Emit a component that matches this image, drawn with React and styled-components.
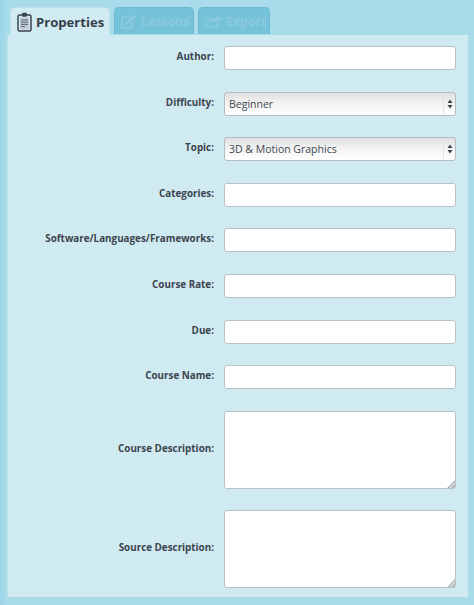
import React from "react";
import styled, { createGlobalStyle } from "styled-components";

const Global = createGlobalStyle`
  html, body { margin: 0; padding: 0; background: #a6dcea; }
  body { font-family: "Open Sans", "Liberation Sans", sans-serif; }
  * { box-sizing: border-box; }
`;

const Page = styled.div`
  width: 474px;
  height: 605px;
  padding: 7px 6px 7px 7px;
  display: flex;
  flex-direction: column;
  overflow: hidden;
  background: linear-gradient(90deg, #9ad5e6 0, #a8dcea 7px, #a8dcea 100%);
`;

const TabBar = styled.div`
  display: flex;
  align-items: flex-end;
  gap: 4px;
  padding-left: 3px;
  height: 28px;
`;

const Tab = styled.div`
  display: flex;
  align-items: center;
  gap: 4px;
  width: ${(p) => p.$w}px;
  height: ${(p) => (p.$active ? "28px" : "27px")};
  margin-bottom: ${(p) => (p.$active ? "0" : "1px")};
  padding: ${(p) => (p.$active ? "0 0 0 6px" : "0 0 0 5px")};
  border-radius: 5px 5px 0 0;
  background: ${(p) => (p.$active ? "#d1ebf3" : "#75c2d9")};
  border: 1px solid ${(p) => (p.$active ? "#bddfe9" : "#6cb9d0")};
  border-bottom: none;
  color: ${(p) => (p.$active ? "#363f48" : "#8ccadd")};
  font-size: ${(p) => (p.$active ? "13.1px" : "12.3px")};
  font-weight: 700;
  white-space: nowrap;
`;

const Panel = styled.div`
  flex: 1;
  background: #d0eaf2;
  border-radius: 0 0 3px 3px;
  border-bottom: 1px solid #b7d8e3;
  border-left: 1px solid #bfdfe9;
  padding: 11px 12px 0 0;
  display: grid;
  grid-template-columns: 206px 232px;
  column-gap: 10px;
  row-gap: 21.6px;
  grid-auto-rows: min-content;
  align-items: center;
`;

const Label = styled.label`
  justify-self: end;
  padding-bottom: 4px;
  font-size: 9.85px;
  font-weight: 700;
  color: #3c444e;
  white-space: nowrap;
`;

const Input = styled.div`
  height: 24px;
  background: #fff;
  border: 1px solid #b9c2c7;
  border-radius: 3px;
`;

const Select = styled.div`
  height: 24px;
  display: flex;
  align-items: center;
  padding-left: 4px;
  border: 1px solid #b3bdc2;
  border-radius: 3px;
  background: linear-gradient(180deg, #e0e0e0 0%, #f2f2f2 45%, #ffffff 100%);
  font-size: 10.5px;
  color: #3f4850;
`;

const SelectText = styled.span`
  flex: 1;
`;

const StepperBox = styled.span`
  display: flex;
  align-items: center;
  justify-content: center;
  width: 12px;
  height: 100%;
  border-left: 1px solid #e4e4e4;
`;

const TextArea = styled.div`
  position: relative;
  height: 78px;
  background: #fff;
  border: 1px solid #b9c2c7;
  border-radius: 3px;
`;

const Grip = styled.svg`
  position: absolute;
  right: 0;
  bottom: 0;
`;

const Stepper = () => (
  <StepperBox>
    <svg width="6" height="10" viewBox="0 0 6 10">
      <path d="M3 0.5 L5.5 4 H0.5 Z M3 9.5 L5.5 6 H0.5 Z" fill="#3a424a" />
    </svg>
  </StepperBox>
);

const Clipboard = () => (
  <svg width="15" height="20" viewBox="0 0 15 20" fill="none">
    <rect x="1" y="3" width="13" height="16" rx="1.5" stroke="#3d464f" strokeWidth="1.5" />
    <rect x="3" y="5.5" width="9" height="12" fill="#c3cfd4" />
    <rect x="5" y="0.8" width="5" height="4" rx="1" fill="#3d464f" />
    <path d="M4 8h7M4 10.2h7M4 12.4h7M4 14.6h4" stroke="#59646d" strokeWidth="1" />
  </svg>
);

const EditIcon = () => (
  <svg width="17" height="15" viewBox="0 0 17 15" fill="none" stroke="#8ccadd">
    <path d="M11 3H2v11h10V8" strokeWidth="1.7" />
    <path d="M6 10l1-3 7-6 2 2-7 6z" fill="#8ccadd" strokeWidth="0.5" />
  </svg>
);

const ShareIcon = () => (
  <svg width="18" height="14" viewBox="0 0 18 14" fill="none" stroke="#8ccadd">
    <path d="M13 9v4H2V5h5" strokeWidth="1.7" />
    <path d="M5 10c0-4 3-6 8-6V1.5l4 3.5-4 3.5V6.5c-3 0-6 1-8 3.5z" fill="#8ccadd" strokeWidth="0.4" />
  </svg>
);

const ResizeGrip = () => (
  <Grip width="8" height="8" viewBox="0 0 8 8">
    <path d="M8 0 L8 8 L0 8 Z" fill="#b5bdc1" />
    <path d="M8 3 L3 8" stroke="#fff" strokeWidth="0.8" />
  </Grip>
);

const singleFields = ["Categories:", "Software/Languages/Frameworks:", "Course Rate:", "Due:", "Course Name:"];

export default function App() {
  return (
    <Page>
      <Global />
      <TabBar>
        <Tab $active $w={100}><Clipboard />Properties</Tab>
        <Tab $w={80}><EditIcon />Lessons</Tab>
        <Tab $w={72}><ShareIcon />Export</Tab>
      </TabBar>
      <Panel>
        <Label>Author:</Label>
        <Input />
        <Label>Difficulty:</Label>
        <Select><SelectText>Beginner</SelectText><Stepper /></Select>
        <Label>Topic:</Label>
        <Select><SelectText>3D &amp; Motion Graphics</SelectText><Stepper /></Select>
        {singleFields.map((f) => (
          <React.Fragment key={f}>
            <Label>{f}</Label>
            <Input />
          </React.Fragment>
        ))}
        <Label>Course Description:</Label>
        <TextArea><ResizeGrip /></TextArea>
        <Label>Source Description:</Label>
        <TextArea><ResizeGrip /></TextArea>
      </Panel>
    </Page>
  );
}
